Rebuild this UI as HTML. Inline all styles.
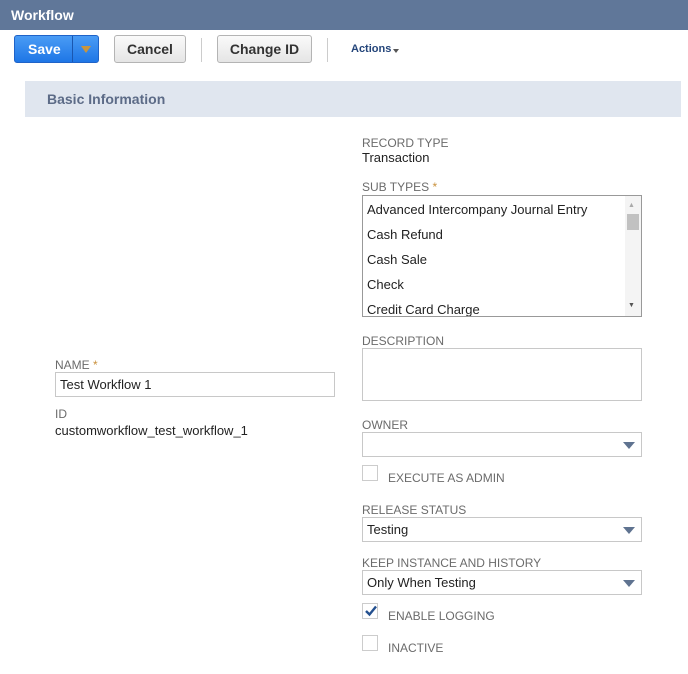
<!DOCTYPE html>
<html><head><style>
*{margin:0;padding:0;box-sizing:border-box}
body{width:688px;height:674px;background:#fff;font-family:"Liberation Sans",Arial,sans-serif;position:relative;overflow:hidden;color:#222}
.a{position:absolute;white-space:nowrap}
.lbl{font-size:12px;color:#6b6b6b;text-transform:uppercase}
.val{font-size:13px;color:#222}
.btn{position:absolute;top:35px;height:28px;border:1px solid #b4b4b4;border-radius:3px;background:linear-gradient(#fafafa,#e5e5e5);font-size:14px;font-weight:bold;color:#333;text-align:center;line-height:26px}
.box{position:absolute;border:1px solid #c8c8c8;background:#fff}
.arr{position:absolute;right:6px;top:9px;width:0;height:0;border-left:6px solid transparent;border-right:6px solid transparent;border-top:7px solid #5f7390}
.cb{position:absolute;width:16px;height:16px;border:1px solid #ccc;background:#fff}
.star{color:#c9913d}
.sep{position:absolute;top:38px;width:1px;height:24px;background:#ccc}
</style></head><body>
<div class="a" style="left:0;top:0;width:688px;height:30px;background:#607799"></div>
<div class="a" style="left:11px;top:7px;color:#fff;font-weight:bold;font-size:14px">Workflow</div>

<div class="a" style="left:14px;top:35px;width:85px;height:28px;border:1px solid #1f63c8;border-radius:3px;background:linear-gradient(#4a9cf5,#1e76e6)"></div>
<div class="a" style="left:72px;top:36px;width:1px;height:26px;background:#1a57b0"></div>
<div class="a" style="left:28px;top:41px;color:#fff;font-weight:bold;font-size:14px">Save</div>
<div class="a" style="left:81px;top:46px;width:0;height:0;border-left:5px solid transparent;border-right:5px solid transparent;border-top:7px solid #c8953e"></div>

<div class="btn" style="left:114px;width:72px">Cancel</div>
<div class="sep" style="left:201px"></div>
<div class="btn" style="left:217px;width:95px">Change ID</div>
<div class="sep" style="left:327px"></div>
<div class="a" style="left:351px;top:43px;font-size:11px;font-weight:bold;color:#24457a">Actions</div>
<div class="a" style="left:393px;top:49px;width:0;height:0;border-left:3px solid transparent;border-right:3px solid transparent;border-top:4px solid #555"></div>

<div class="a" style="left:25px;top:81px;width:656px;height:36px;background:#e0e6ef"></div>
<div class="a" style="left:47px;top:91px;font-size:14px;font-weight:bold;color:#5c6b87">Basic Information</div>

<div class="a lbl" style="left:362px;top:136px">Record Type</div>
<div class="a val" style="left:362px;top:150px">Transaction</div>
<div class="a lbl" style="left:362px;top:180px">Sub Types <span class="star">*</span></div>
<div class="box" style="left:362px;top:195px;width:280px;height:122px;overflow:hidden;border-color:#999">
 <div class="a val" style="left:4px;top:6px">Advanced Intercompany Journal Entry</div>
 <div class="a val" style="left:4px;top:31px">Cash Refund</div>
 <div class="a val" style="left:4px;top:56px">Cash Sale</div>
 <div class="a val" style="left:4px;top:81px">Check</div>
 <div class="a val" style="left:4px;top:106px">Credit Card Charge</div>
 <div class="a" style="left:262px;top:0;width:16px;height:120px;background:#f4f4f4"></div>
 <div class="a" style="left:264px;top:18px;width:12px;height:16px;background:#c1c1c1"></div>
 <div class="a" style="left:265px;top:6px;font-size:7px;color:#aaa">▲</div>
 <div class="a" style="left:265px;top:106px;font-size:7px;color:#555">▼</div>
</div>

<div class="a lbl" style="left:362px;top:334px">Description</div>
<div class="box" style="left:362px;top:348px;width:280px;height:53px"></div>

<div class="a lbl" style="left:362px;top:418px">Owner</div>
<div class="box" style="left:362px;top:432px;width:280px;height:25px"><div class="arr"></div></div>
<div class="cb" style="left:362px;top:465px"></div>
<div class="a lbl" style="left:388px;top:471px">Execute as Admin</div>

<div class="a lbl" style="left:362px;top:503px">Release Status</div>
<div class="box" style="left:362px;top:517px;width:280px;height:25px"><div class="a val" style="left:4px;top:4px">Testing</div><div class="arr"></div></div>

<div class="a lbl" style="left:362px;top:556px">Keep Instance and History</div>
<div class="box" style="left:362px;top:570px;width:280px;height:25px"><div class="a val" style="left:4px;top:4px">Only When Testing</div><div class="arr"></div></div>

<div class="cb" style="left:362px;top:603px"><svg width="14" height="14" style="position:absolute;left:1px;top:0"><path d="M2 7 L5.5 10.5 L12 2.5" stroke="#24508f" stroke-width="2.4" fill="none"/></svg></div>
<div class="a lbl" style="left:388px;top:609px">Enable Logging</div>
<div class="cb" style="left:362px;top:635px"></div>
<div class="a lbl" style="left:388px;top:641px">Inactive</div>

<div class="a lbl" style="left:55px;top:358px">Name <span class="star">*</span></div>
<div class="box" style="left:55px;top:372px;width:280px;height:25px"><div class="a val" style="left:4px;top:4px">Test Workflow 1</div></div>
<div class="a lbl" style="left:55px;top:407px">ID</div>
<div class="a val" style="left:55px;top:423px">customworkflow_test_workflow_1</div>
</body></html>
